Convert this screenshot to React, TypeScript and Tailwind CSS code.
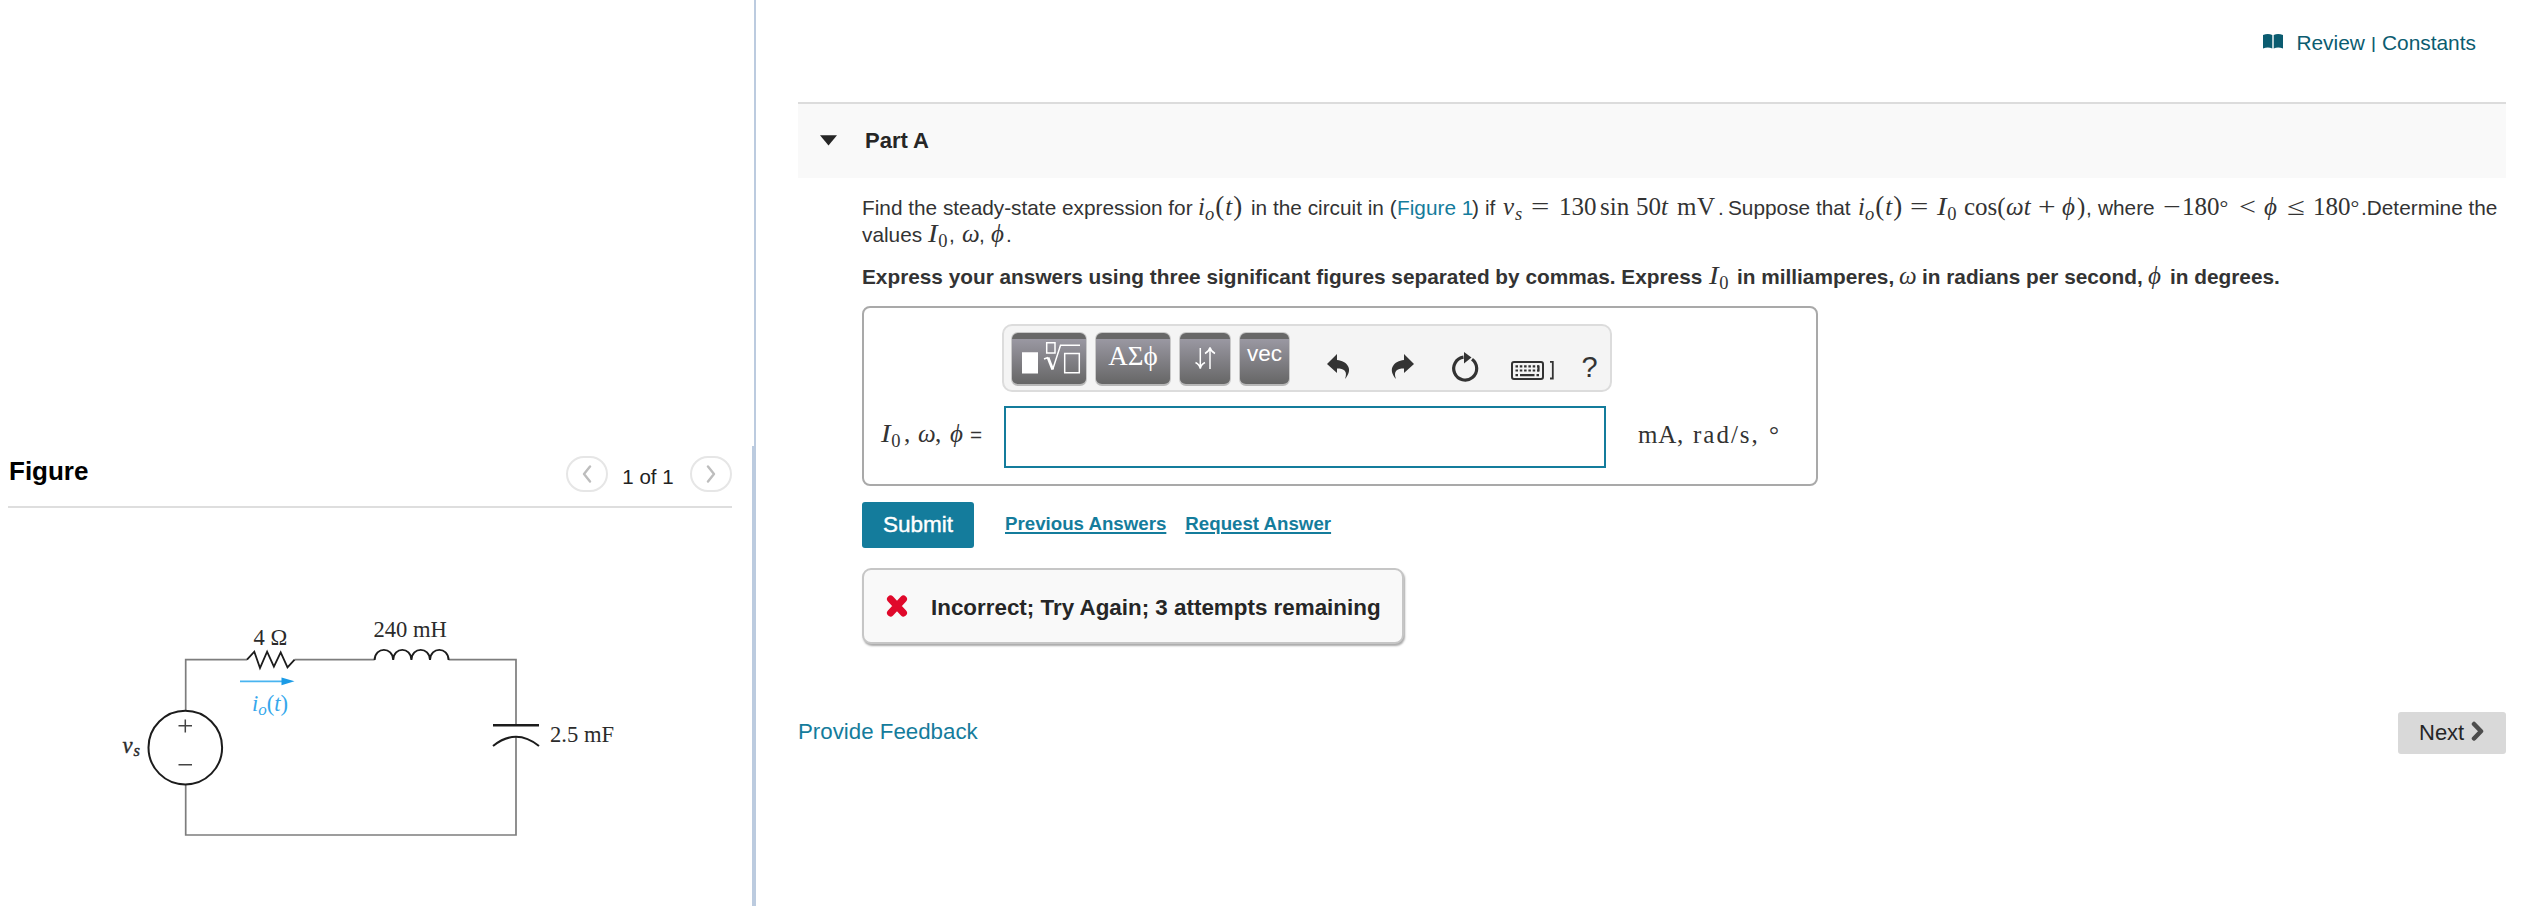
import type { ReactNode } from "react";

const MATH = "font-['Liberation_Serif',serif] text-[25px] font-normal";

function Seg({ w, children, className = "" }: { w: string; children: ReactNode; className?: string }) {
  return <span className={`inline-block shrink-0 whitespace-pre ${w} ${className}`}>{children}</span>;
}

function M({ w, children, className = "" }: { w: string; children: ReactNode; className?: string }) {
  return <Seg w={w} className={`${MATH} ${className}`}>{children}</Seg>;
}

function Sub({ children }: { children: ReactNode }) {
  return <span className="inline-block translate-y-[5px] text-[18.500px] leading-none">{children}</span>;
}

function Current() {
  return (
    <>
      <i>i</i>
      <Sub><i>o</i></Sub>
      <span className="ml-px text-[27px] leading-none">(</span>
      <i className="mx-px">t</i>
      <span className="text-[27px] leading-none">)</span>
    </>
  );
}

function I0() {
  return (
    <>
      <i className="inline-block origin-left scale-x-[1.15] mr-[2px]">I</i>
      <Sub>0</Sub>
    </>
  );
}

function Circuit() {
  return (
    <svg className="mt-[92px] ml-[100px] block" width="560" height="260" viewBox="100 600 560 260" fill="none">
      <g stroke="#7d7d7d" strokeWidth="1.7">
        <path d="M185.7 711V659.7H247M294.6 659.7H374.6M448.6 659.7H516V725M516 737V835H185.7V784.5" />
      </g>
      <g stroke="#1c1c1c" strokeWidth="2">
        <circle cx="185.3" cy="747.6" r="36.8" />
        <path d="M247 659.7L254.3 651.7L260 668L267.1 651.7L273.9 666.7L280.7 652.3L287.5 667.3L294.6 659.7" strokeWidth="1.8" />
        <path d="M374.6 660C375 646.500 392.800 646.500 393.200 660C393.600 646.500 411 646.500 411.400 660C411.800 646.500 429.600 646.500 430 660C430.400 646.500 448.200 646.500 448.600 660" strokeWidth="1.9" />
        <path d="M493 725.200H539" strokeWidth="2.400" />
        <path d="M493 746Q516 727.500 539 746" />
      </g>
      <g stroke="#444" strokeWidth="1.500">
        <path d="M178.500 725.700H192M185.300 719.500V732.500M178.500 764.800H192" />
      </g>
      <path d="M240 681.300H284" stroke="#49b4f0" strokeWidth="1.700" />
      <path d="M281.500 677.500L294.500 681.300L281.500 685.200Z" fill="#1b9be6" />
      <g className="font-['Liberation_Serif',serif]" fontSize="22.600" fill="#2b2b2b">
        <text x="253.500" y="645">4 Ω</text>
        <text x="373.500" y="636.500">240 mH</text>
        <text x="550" y="742">2.5 mF</text>
        <text x="122.500" y="753" fontStyle="italic" stroke="#2b2b2b" strokeWidth=".4">v<tspan dx="1" dy="3" fontSize="16.500">s</tspan></text>
        <text x="252" y="710.500" fontStyle="italic" fill="#35a7ec">i<tspan dy="4" fontSize="17">o</tspan><tspan dy="-4" fontStyle="normal">(</tspan>t<tspan fontStyle="normal">)</tspan></text>
      </g>
    </svg>
  );
}

function Pager({ d }: { d: string }) {
  return (
    <button className="flex h-9 w-[42px] items-center justify-center rounded-[18px] border-2 border-[#e6e6e6]">
      <svg width="12" height="18" viewBox="0 0 12 18" fill="none" stroke="#bdbdbd" strokeWidth="2.400" strokeLinecap="round" strokeLinejoin="round">
        <path d={d} />
      </svg>
    </button>
  );
}

function Key({ w, children }: { w: string; children: ReactNode }) {
  return (
    <button className={`${w} flex h-[54px] shrink-0 justify-center overflow-hidden rounded-[7px] border border-[#c9c9c9] border-b-2 border-b-[#b8b8b8] bg-[linear-gradient(#686868_0,#686868_6px,#9a98a2_6px,#666_100%)] pt-px text-white`}>
      {children}
    </button>
  );
}

function Toolbar() {
  return (
    <div className="flex h-[68px] w-[610px] rounded-[10px] border-2 border-[#dcdcdc] bg-[#f4f4f4] pt-1.5 pl-[7px] text-[#333]">
      <div className="flex gap-2">
        <Key w="w-[76px]">
          <svg className="block shrink-0" width="72" height="50" viewBox="1013 334 72 50" fill="none" stroke="white" strokeWidth="1.500">
            <path d="M1022 352.300H1038V373.500H1022Z" fill="white" stroke="none" />
            <path d="M1046.700 342.700H1055V353H1046.700Z" />
            <path d="M1044 359L1048 357.500" />
            <path d="M1048 357.500L1052.700 369.500" strokeWidth="2.800" />
            <path d="M1052.700 369.500L1060.500 345.300H1080" />
            <path d="M1064.700 353.500H1079.300V372.700H1064.700Z" />
          </svg>
        </Key>
        <Key w="w-[76px]">
          <span className="block pt-[9px] font-['Liberation_Serif',serif] text-[27px] leading-none">ΑΣϕ</span>
        </Key>
        <Key w="w-[52px]">
          <svg className="block shrink-0" width="48" height="50" viewBox="1181 334 48 50" fill="none" stroke="white" strokeWidth="1.500">
            <path d="M1200.300 348V368M1195.500 362.500Q1199.500 364.500 1200.300 368.500Q1201 364.500 1205 362.500" />
            <path d="M1210 369V348M1205 353.500Q1209 351.500 1210 347.500Q1211 351.500 1215 353.500" />
          </svg>
        </Key>
        <Key w="w-[51px]">
          <span className="block pt-[9px] text-[22.500px] leading-none">vec</span>
        </Key>
      </div>
      <svg className="ml-[22px] -mt-1.5" width="296" height="64" viewBox="1312 326 296 64" fill="none">
        <path d="M1327 364L1337 354V360C1347 361 1354 369 1345 379C1348 371 1344 368.500 1337 368.500V373Z" fill="#333" />
        <path d="M1414 364L1404 354V360C1394 361 1387 369 1396 379C1393 371 1397 368.500 1404 368.500V373Z" fill="#333" />
        <path d="M1463.500 357.200A11.500 11.500 0 1 0 1472 359.300" stroke="#333" strokeWidth="3.200" />
        <path d="M1464 352L1471.500 357.500L1464 363.500Z" fill="#333" />
        <rect x="1512" y="362" width="31" height="17" rx="2" stroke="#333" strokeWidth="2" />
        <path d="M1515.500 366.300H1539M1515.500 370.500H1539" stroke="#333" strokeWidth="2.200" strokeDasharray="2.500 1.800" />
        <path d="M1515.500 375.200H1518M1520 375.200H1534.500M1536.500 375.200H1539M1538.500 365.500V371.500" stroke="#333" strokeWidth="2.200" />
        <path d="M1550 361.800H1552.800V378.500H1550" stroke="#333" strokeWidth="1.800" />
        <text x="1581.500" y="377" fontSize="29" fill="#333" className="font-['Liberation_Sans',sans-serif]">?</text>
      </svg>
    </div>
  );
}

function Question() {
  return (
    <div className="ml-[64px] pt-[15px] text-[20.8px] leading-[27px] text-[#333]">
      <div className="flex h-[27px] items-baseline">
        <Seg w="w-[336px]">Find the steady-state expression for</Seg>
        <M w="w-[53px]"><Current /></M>
        <Seg w="w-[146px]">in the circuit in (</Seg>
        <Seg w="w-[75px]" className="text-[#147c9c]">Figure 1</Seg>
        <Seg w="w-[13px]">)</Seg>
        <Seg w="w-[18px]">if</Seg>
        <M w="w-[28px]"><i>v</i><Sub><i className="ml-px">s</i></Sub></M>
        <M w="w-[28px]"><span className="inline-block scale-x-[1.3] origin-left">=</span></M>
        <M w="w-[41px]">130</M>
        <M w="w-[36px]">sin</M>
        <M w="w-[41px]">50<i>t</i></M>
        <M w="w-[41px]" className="tracking-[.5px]">mV</M>
        <Seg w="w-[10px]">.</Seg>
        <Seg w="w-[130px]">Suppose that</Seg>
        <M w="w-[52px]"><Current /></M>
        <M w="w-[27px]"><span className="inline-block scale-x-[1.3] origin-left">=</span></M>
        <M w="w-[27px]"><I0 /></M>
        <M w="w-[42px]">cos(</M>
        <M w="w-[32px]"><i>ωt</i></M>
        <M w="w-[24px]"><span className="inline-block scale-x-[1.25] origin-left">+</span></M>
        <M w="w-[15px]"><i>ϕ</i></M>
        <M w="w-[9px]">)</M>
        <Seg w="w-[12px]">,</Seg>
        <Seg w="w-[65px]">where</Seg>
        <M w="w-[19px]"><span className="inline-block scale-x-[1.25] origin-left">−</span></M>
        <M w="w-[57px]">180<span className="text-[22px] leading-none">°</span></M>
        <M w="w-[25px]"><span className="inline-block scale-x-[1.2] origin-left">&lt;</span></M>
        <M w="w-[23px]"><i>ϕ</i></M>
        <M w="w-[26px]"><span className="inline-block scale-x-[1.3] origin-left">≤</span></M>
        <M w="w-[48px]">180<span className="text-[22px] leading-none">°</span></M>
        <Seg w="w-[138px]">.Determine the</Seg>
      </div>
      <div className="flex h-[27px] items-baseline">
        <Seg w="w-[66px]">values</Seg>
        <M w="w-[21px]"><I0 /></M>
        <Seg w="w-[13px]">,</Seg>
        <M w="w-[17px]"><i>ω</i></M>
        <Seg w="w-[12px]">,</Seg>
        <M w="w-[15px]"><i>ϕ</i></M>
        <Seg w="w-[10px]">.</Seg>
      </div>
      <div className="mt-[15px] flex h-[27px] items-baseline font-bold">
        <Seg w="w-[847px]">Express your answers using three significant figures separated by commas. Express</Seg>
        <M w="w-[28px]"><I0 /></M>
        <Seg w="w-[162px]">in milliamperes,</Seg>
        <M w="w-[23px]"><i>ω</i></M>
        <Seg w="w-[226px]">in radians per second,</Seg>
        <M w="w-[22px]"><i>ϕ</i></M>
        <Seg w="w-[120px]">in degrees.</Seg>
      </div>
    </div>
  );
}

function AnswerBox() {
  return (
    <div className="mt-[17px] ml-16 h-[180px] w-[956px] rounded-lg border-2 border-[#a9a9a9] pt-4 text-[#333]">
      <div className="ml-[138px]"><Toolbar /></div>
      <div className="mt-3.5 flex h-[62px]">
        <div className="flex h-[62px] w-[140px] shrink-0 items-baseline pl-[17px] leading-[55px]">
          <M w="w-[23px]"><I0 /></M>
          <M w="w-[14px]">,</M>
          <M w="w-[17px]"><i>ω</i></M>
          <M w="w-[15px]">,</M>
          <M w="w-[20px]"><i>ϕ</i></M>
          <Seg w="w-[14px]" className="text-[20.7px]">=</Seg>
        </div>
        <input aria-label="Answer" className="h-[62px] w-[602px] shrink-0 border-2 border-[#147c9c] bg-white px-2 outline-none" />
        <div className="flex h-[62px] items-baseline pl-8 leading-[57px]">
          <M w="w-[55px]" className="tracking-[.8px]">mA,</M>
          <M w="w-[76px]" className="tracking-[2px]">rad/s,</M>
          <M w="w-[10px]">°</M>
        </div>
      </div>
    </div>
  );
}

export default function App() {
  return (
    <div className="flex h-[906px] w-[2548px] overflow-hidden bg-white font-['Liberation_Sans',Arial,sans-serif]">
      <aside className="flex h-[906px] w-[756px] shrink-0 flex-col">
        <div className="h-[446px] shrink-0 border-r-2 border-[#bccbdf]" />
        <div className="h-[460px] border-r-4 border-[#bccbdf] pl-2">
          <div className="flex h-[62px] w-[724px] border-b-2 border-[#dedede] pt-[10px]">
            <h2 className="ml-px text-[26px] leading-[30px] font-bold text-black">Figure</h2>
            <div className="ml-auto flex">
              <Pager d="M9 1.500L3 9L9 16.500" />
              <span className="w-[82px] pt-[7px] pr-[2px] text-center text-[20.500px] leading-[28px] text-[#222]">1 of 1</span>
              <Pager d="M3 1.500L9 9L3 16.500" />
            </div>
          </div>
          <div className="-ml-2"><Circuit /></div>
        </div>
      </aside>
      <main className="w-[1792px] pl-[42px]">
        <div className="flex h-[102px] justify-end pt-[29px] pr-[72px] text-[20.900px] leading-[28px] text-[#0b5c70]">
          <svg className="mt-[5px] mr-[13px]" width="20" height="15" viewBox="0 0 20 15" fill="#0b5c70">
            <path d="M0 1Q5-1 9.300 1V14.500Q5 12.500 0 14.500ZM10.700 1Q15-1 20 1V14.500Q15 12.500 10.700 14.500Z" />
          </svg>
          <span className="whitespace-pre">Review <span className="inline-block origin-[50%_60%] scale-y-75">|</span> Constants</span>
        </div>
        <header className="flex h-[76px] w-[1708px] border-t-2 border-[#dcdcdc] bg-[#f9f9f9]">
          <svg className="mt-[31px] ml-[22px]" width="17" height="11" viewBox="0 0 17 11" fill="#262626">
            <path d="M0 .3H17L8.500 10.500Z" />
          </svg>
          <h3 className="ml-[28px] pt-[22px] text-[22px] leading-[30px] font-bold text-[#262626]">Part A</h3>
        </header>
        <Question />
        <AnswerBox />
        <div className="mt-4 ml-16 flex h-[46px]">
          <button className="h-[46px] w-28 rounded-[3px] bg-[#147c9c] text-[22.500px] leading-[44px] text-white [-webkit-text-stroke:.4px_white]">Submit</button>
          <a className="ml-[31px] pt-[9px] text-[18.700px] leading-[26px] font-bold text-[#147c9c] underline decoration-2 underline-offset-2">Previous Answers</a>
          <a className="ml-[19px] pt-[9px] text-[18.700px] leading-[26px] font-bold text-[#147c9c] underline decoration-2 underline-offset-2">Request Answer</a>
        </div>
        <div className="mt-5 ml-16 flex h-[76px] w-[542px] rounded-[9px] border-2 border-[#c6c6c6] bg-[#f9f9f9] shadow-[1px_2px_2px_#aaa]">
          <svg className="mt-[25px] ml-[22px]" width="22" height="22" viewBox="0 0 22 22" fill="none" stroke="#e0092b" strokeWidth="7" strokeLinecap="round">
            <path d="M4.500 4L17.500 18M17.500 4L4.500 18" />
          </svg>
          <p className="ml-[23px] pt-[23px] text-[22.400px] leading-[30px] font-bold whitespace-nowrap text-[#262626]">Incorrect; Try Again; 3 attempts remaining</p>
        </div>
        <footer className="mt-[68px] flex h-[42px] w-[1708px] justify-between">
          <a className="pt-[5px] text-[22.300px] leading-[30px] text-[#147c9c]">Provide Feedback</a>
          <button className="flex h-[42px] w-[108px] rounded-[3px] bg-[#d9d9d9] pt-[9px] pl-[21px] text-[22px] leading-[24px] text-[#262626]">
            Next
            <svg className="ml-[7px]" width="14" height="22" viewBox="0 0 14 22" fill="none" stroke="#4d4d4d" strokeWidth="4.500" strokeLinecap="round" strokeLinejoin="round">
              <path d="M3 3L10 10.300L3 17.500" />
            </svg>
          </button>
        </footer>
      </main>
    </div>
  );
}
